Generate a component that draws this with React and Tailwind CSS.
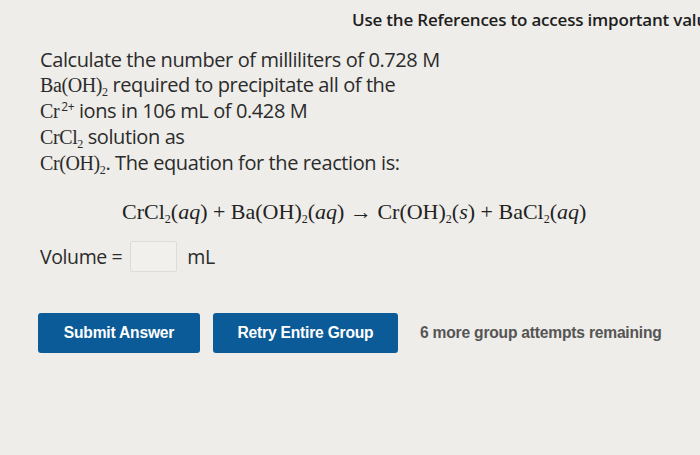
const Sub = ({ children }) => (
  <span className="inline-block text-[12px] leading-none relative top-[4px]">{children}</span>
);

const Chem = ({ children }) => (
  <span className="font-['Liberation_Serif',serif] text-[20px]">{children}</span>
);

const App = () => {
  return (
    <div className="w-[700px] h-[455px] overflow-hidden bg-[#eeede9] text-[#2b2b2b] font-['Open_Sans',sans-serif]">
      <div className="pl-[352px] pt-[8px] h-[32px] whitespace-nowrap overflow-hidden text-[17px] leading-[24px] font-semibold tracking-[-0.2px] text-[#1e1e1e]">
        Use the References to access important values if needed for this question.
      </div>

      <div className="pl-[40px] pt-[15px] text-[20px] leading-[25px] tracking-[-0.4px]">
        <p>Calculate the number of milliliters of 0.728 M</p>
        <p>
          <Chem>Ba(OH)<Sub>2</Sub></Chem> required to precipitate all of the
        </p>
        <p>
          <Chem>Cr</Chem>
          <span className="inline-block ml-[2px] text-[12px] leading-none relative top-[-7px]">2+</span> ions in 106 mL of 0.428 M
        </p>
        <p>
          <Chem>CrCl<Sub>2</Sub></Chem> solution as
        </p>
        <p>
          <Chem>Cr(OH)<Sub>2</Sub></Chem>. The equation for the reaction is:
        </p>
      </div>

      <div className="pl-[122px] pt-[22px] font-['Liberation_Serif',serif] text-[22px] leading-[28px] text-[#222] whitespace-nowrap">
        CrCl<Sub>2</Sub>(<i>aq</i>) + Ba(OH)<Sub>2</Sub>(<i>aq</i>) → Cr(OH)<Sub>2</Sub>(<i>s</i>) + BaCl<Sub>2</Sub>(<i>aq</i>)
      </div>

      <div className="pl-[40px] pt-[15px] flex items-center text-[19.5px] tracking-[-0.4px]">
        <span>Volume =</span>
        <div className="ml-[8px] w-[47px] h-[31px] border border-[#dcdcd8] bg-[#f1f0ec] rounded-[2px]" />
        <span className="ml-[10px]">mL</span>
      </div>

      <div className="pl-[38px] pt-[41px] flex items-center gap-[13px] font-['Liberation_Sans',sans-serif] font-bold text-[15.6px] tracking-[-0.2px]">
        <button className="w-[162px] h-[40px] rounded-[3px] bg-[#0b5b98] text-white">Submit Answer</button>
        <button className="w-[185px] h-[40px] rounded-[3px] bg-[#0b5b98] text-white">Retry Entire Group</button>
        <span className="ml-[9px] text-[#555]">6 more group attempts remaining</span>
      </div>
    </div>
  );
};

export default App;
